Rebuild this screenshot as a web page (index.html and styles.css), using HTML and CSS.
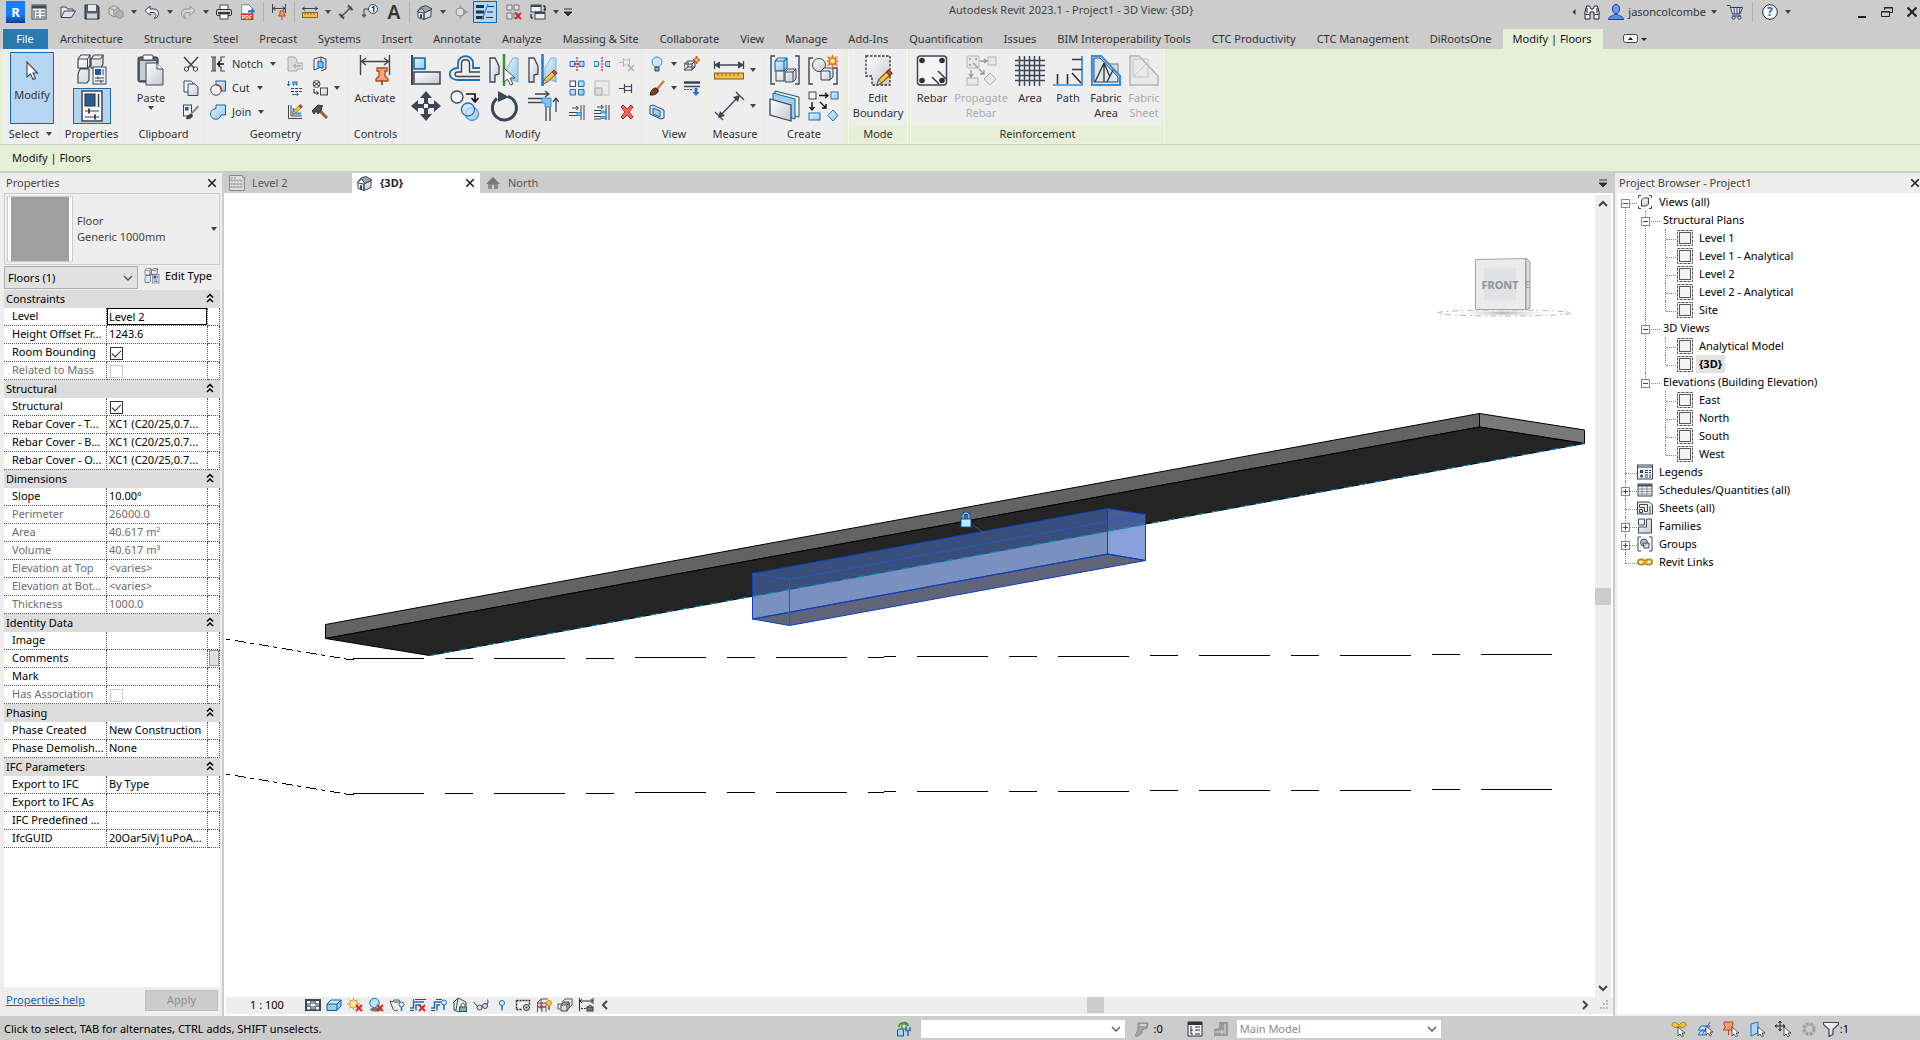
FILE: index.html
```html
<!DOCTYPE html>
<html lang="en">
<head>
    <meta charset="UTF-8">
    <meta name="viewport" content="width=device-width, initial-scale=1.0">
    <title>Autodesk Revit 2023.1 - Project1 - 3D View: {3D}</title>
    <link rel="stylesheet" href="styles.css">
</head>
<body>
    <!-- Icon sprite -->
    <svg class="sprite" aria-hidden="true">
        <defs>
            <linearGradient id="gMetal" x1="0" y1="0" x2="1" y2="1"><stop offset="0" stop-color="#fff"/><stop offset="1" stop-color="#c3c8d0"/></linearGradient>
            <linearGradient id="gBlue" x1="0" y1="0" x2="1" y2="1"><stop offset="0" stop-color="#e3f3fc"/><stop offset="1" stop-color="#93c6e6"/></linearGradient>
            <radialGradient id="gShadow"><stop offset="0" stop-color="#aaa"/><stop offset="1" stop-color="#fff" stop-opacity="0"/></radialGradient>
        </defs>

        <!-- shared 16px parts -->
        <symbol id="caret" viewBox="0 0 8 6"><path d="M1 1h6L4 5z" fill="#444"/></symbol>
        <symbol id="close" viewBox="0 0 12 12"><path d="M1.500 1.500l9 9M10.500 1.500l-9 9" stroke="#222" stroke-width="2" fill="none"/></symbol>
        <symbol id="chevron" viewBox="0 0 12 8"><path d="M2 2l4 4 4-4" stroke="#555" stroke-width="1.300" fill="none"/></symbol>
        <symbol id="collapse" viewBox="0 0 8 10"><path d="M1 4.500l3-3 3 3M1 9l3-3 3 3" stroke="#000" stroke-width="1.500" fill="none"/></symbol>
        <symbol id="cursor" viewBox="0 0 12 20"><path d="M1 1v15l3.500-3.200L7 18.500l2.500-1L7 12h4.500z" fill="#fff" stroke="#3c4654" stroke-width="1.100"/></symbol>
        <symbol id="redx" viewBox="0 0 8 8"><path d="M1 1l6 6M7 1L1 7" stroke="#d8282a" stroke-width="2" fill="none"/></symbol>
        <symbol id="pencil" viewBox="0 0 16 16"><path d="M1 15l1.500-5L12 1l3 3-9.500 9z" fill="#ffc62e" stroke="#7a5018"/><path d="M12 1l3 3-2 2-3-3z" fill="#b9623b" stroke="#7a3018"/><path d="M1 15l1.500-4.500 3 2.500z" fill="#f3dcb0" stroke="#444" stroke-width=".6"/></symbol>
        <symbol id="house3d" viewBox="0 0 16 16"><path d="M1 8v5.500L7 15.500V9zM7 9v6.500l7-3V5.500z" fill="url(#gMetal)" stroke="#3c4654"/><path d="M0 8l4-5 5-1.500L15 5 8 8.500 4.500 4z" fill="#9aa3ae" stroke="#3c4654"/><path d="M3 10v4l2 .6v-4z" fill="#3c4654"/></symbol>

        <!-- quick access -->
        <symbol id="q-list" viewBox="0 0 16 16"><rect x="1" y="1" width="14" height="14" fill="#eef0f2" stroke="#3c4654"/><path d="M1 3h14" stroke="#3c4654" stroke-width="3"/><path d="M3 6v8M5 7h3M5 10h3M5 13h3M10 7h4M10 10h4M10 13h4" stroke="#3c4654" fill="none"/></symbol>
        <symbol id="q-open" viewBox="0 0 16 16"><path d="M1 13V3h5l1.500 2H13v2" fill="#e4e6e8" stroke="#3c4654"/><path d="M1 13.500l3.500-6.500H15.500l-4 6.500z" fill="#dfe2e6" stroke="#3c4654"/></symbol>
        <symbol id="q-save" viewBox="0 0 16 16"><path d="M1 1h12l2 2v12H1z" fill="#56606c" stroke="#2b333d"/><rect x="4" y="1" width="8" height="6" fill="#e8eaec"/><rect x="3" y="9.500" width="10" height="5" fill="#cfd3d8"/></symbol>
        <symbol id="q-sync" viewBox="0 0 16 16"><path d="M1 4l5-2.500L11 4v6l-5 3-5-3zM1 4l5 2.500L11 4M6 6.500V13" fill="#d5d5d5" stroke="#8d8d8d"/><path d="M8 8l3.500-2L15 8v4.500l-3.500 2L8 12.500z" fill="#b5b5b5" stroke="#8d8d8d"/></symbol>
        <symbol id="q-undo" viewBox="0 0 16 16"><path d="M1 6.500L6 2v3h4c6 0 6 9 0 9.500 3-2.500 2.500-6-1-6H6v3z" fill="#f2f3f4" stroke="#3c4654"/></symbol>
        <symbol id="q-redo" viewBox="0 0 16 16"><path d="M15 6.500L10 2v3H6c-6 0-6 9 0 9.500-3-2.500-2.500-6 1-6h3v3z" fill="#d4d4d4" stroke="#909090"/></symbol>
        <symbol id="q-print" viewBox="0 0 16 16"><path d="M4 6V1h8v5" fill="#fff" stroke="#3c4654"/><rect x=".5" y="5.500" width="15" height="6" rx="1.500" fill="#cfd3d8" stroke="#2b333d"/><path d="M2 9h12" stroke="#2b333d" stroke-width="2"/><path d="M4 10h8v5H4z" fill="#fff" stroke="#3c4654"/></symbol>
        <symbol id="q-dim" viewBox="0 0 16 16"><path d="M1.500 0v9M14.500 0v9M2 4.500h12M4.500 2.500L2 4.500l2.500 2M11.500 2.500L14 4.500l-2.500 2" stroke="#3c4654" fill="none"/><path d="M9 7h4v3l1.500 2h-7L9 10zM11 12v4" fill="#f0a070" stroke="#b5451a"/></symbol>
        <symbol id="q-ruler" viewBox="0 0 16 16"><path d="M0 4.500h16M3 2.500L.5 4.500 3 6.500M13 2.500l2.500 2L13 6.500" stroke="#3c4654" fill="none"/><path d="M.5 8.500h15v5H.5z" fill="#f2c14e" stroke="#8a6514"/><path d="M3 9v2M6 9v2M9 9v2M12 9v2" stroke="#8a6514"/></symbol>
        <symbol id="q-aligned" viewBox="0 0 16 16"><path d="M3 13L13 3M1 10l5 5M10 1l5 5M3 9.500V13h3.500M9.500 3H13v3.500" stroke="#3c4654" fill="none" stroke-width="1.200"/></symbol>
        <symbol id="q-section" viewBox="0 0 16 16"><path d="M5 8L8 3l7 5-7 5z" fill="#9b9b9b"/><circle cx="7" cy="8" r="4" fill="#dedede" stroke="#8a8a8a"/><path d="M7 1v3M7 12v3" stroke="#8a8a8a"/></symbol>
        <symbol id="q-thin" viewBox="0 0 20 16"><path d="M1 2.500h8M1 8h8M1 13.500h8" stroke="#2b333d" stroke-width="3"/><path d="M12 2.500h7M12 8h6M11 13.500h7" stroke="#2b333d"/><path d="M13 0L7 16" stroke="#3391e6" stroke-width="1.300"/></symbol>
        <symbol id="q-hidden" viewBox="0 0 16 16"><path d="M1 1h5v5H1zM8 1h5v5H8zM1 9h5v6H1zM8 9h4v5H8z" fill="#dfe2e6" stroke="#777"/><path d="M9 9l6 6M15 9l-6 6" stroke="#d8282a" stroke-width="2"/></symbol>
        <symbol id="q-switch" viewBox="0 0 16 16"><rect x="1" y="1" width="10" height="7" fill="#eee" stroke="#3c4654"/><rect x="5" y="8" width="10" height="7" fill="#eee" stroke="#3c4654"/><path d="M1 2h10M5 9h10" stroke="#3c4654" stroke-width="2"/><path d="M13 2h2v4M1 10v4h2M13.500 5L15 6.500 16 5" stroke="#000" fill="none"/></symbol>
        <symbol id="q-custom" viewBox="0 0 10 8"><path d="M1 1h8M1 4h8L5 8z" stroke="#333" fill="#333"/></symbol>
        <symbol id="q-binoc" viewBox="0 0 16 16"><path d="M1 8l1.500-6h3L7 5h2l1.500-3h3L15 8v7h-5V8H6v7H1z" fill="#f0f0f4" stroke="#1e2430"/><path d="M3 4v5M13 4v5M1.500 10.500h4M10.500 10.500h4" stroke="#1e2430" fill="none"/></symbol>
        <symbol id="q-user" viewBox="0 0 16 16"><ellipse cx="8" cy="5" rx="3.500" ry="4.500" fill="#6a98f0" stroke="#1d3f9a"/><path d="M.5 15.500c.5-4 4-3 6-5h3c2 2 5.500 1 6 5z" fill="#5d8eea" stroke="#1d3f9a"/></symbol>
        <symbol id="q-cart" viewBox="0 0 16 16"><path d="M0 1.500h3L5.500 10H13l2.500-6.500H4" fill="#eceef4" stroke="#2b3870"/><path d="M5 12h9M7 4l.5 6M10 4v6M13 4l-1 6" stroke="#2b3870" fill="none"/><circle cx="6.500" cy="13.700" r="1.500" fill="#fff" stroke="#2b3870"/><circle cx="12.500" cy="13.700" r="1.500" fill="#fff" stroke="#2b3870"/></symbol>

        <!-- ribbon, large -->
        <symbol id="r-types" viewBox="0 0 32 32"><path d="M2 5l3-4h9v11l-2 2H2zM15 5l3-4h9v9l-2 4H15zM2 20l2-5h9v11l-2 3H2z" fill="url(#gMetal)" stroke="#3c4654" stroke-width="1.200"/><path d="M2 5h9.500v9M11.500 5L14 1M15 5h9.500M24.500 5L27 1" stroke="#3c4654" fill="none"/><rect x="17" y="13" width="13" height="17" fill="#f3f3f3" stroke="#3c4654"/><rect x="19" y="15" width="6" height="6" fill="#1d5b9c"/><path d="M27 15v6M19 24h9M19 27h9M22 22.500v3M25 26v3" stroke="#3c4654"/></symbol>
        <symbol id="r-props" viewBox="0 0 32 32"><rect x="6" y="1" width="20" height="30" fill="#f5f5f5" stroke="#3c4654" stroke-width="1.500"/><rect x="9" y="4" width="10" height="12" fill="#2d5c8f" stroke="#2b333d"/><path d="M22.500 4v13" stroke="#3c4654" stroke-width="1.500"/><path d="M9 21h14M9 27h14" stroke="#3c4654" stroke-width="1.200"/><path d="M13 18.500v5M19 24.500v5" stroke="#3c4654" stroke-width="2"/></symbol>
        <symbol id="r-paste" viewBox="0 0 32 32"><rect x="3" y="3" width="20" height="25" rx="2" fill="#59626e" stroke="#2b333d"/><rect x="8" y="1" width="10" height="5" rx="1" fill="#fff" stroke="#3c4654"/><rect x="5" y="7" width="16" height="19" fill="#c9ccd1"/><path d="M11 9h11l6 6v16H11z" fill="url(#gMetal)" stroke="#3c4654"/><path d="M22 9v6h6" fill="#fff" stroke="#3c4654"/></symbol>
        <symbol id="r-activate" viewBox="0 0 32 32"><path d="M1.500 1v20M30.500 1v20M2 7.500h28M7 4L2.500 7.500 7 11M25 4l4.500 3.500L25 11" stroke="#3c4654" stroke-width="1.400" fill="none"/><path d="M18 14h10v3h-2v5l3 3v2H17v-2l3-3v-5h-2z" fill="#f4a47a" stroke="#b5451a" stroke-width="1.300"/><path d="M23 27v4" stroke="#3c4654" stroke-width="1.500"/></symbol>
        <symbol id="r-align" viewBox="0 0 32 32"><path d="M2 1v30" stroke="#111" stroke-width="1.500"/><rect x="4" y="4" width="11" height="11" fill="url(#gBlue)" stroke="#0b62ae" stroke-width="1.500"/><rect x="4" y="18" width="26" height="12" fill="url(#gMetal)" stroke="#3c4654" stroke-width="1.500"/></symbol>
        <symbol id="r-offset" viewBox="0 0 32 32"><path d="M31 14H24V9c0-9-15-9-15 0v5c-11 0-11 12 0 12h22" fill="none" stroke="#1f6fc0" stroke-width="1.800"/><path d="M31 18H20.500V9.500c0-5-8-5-8 0V18H9c-4 0-4 4.500 0 4.500h22" fill="none" stroke="#3c4654" stroke-width="1.400"/></symbol>
        <symbol id="r-mirror" viewBox="0 0 32 32"><path d="M2 4l5 0 4 8v8l-4 1v7H2z" fill="url(#gMetal)" stroke="#3c4654" stroke-width="1.300"/><path d="M30 4h-5l-6 10v12l6 0 5 2z" fill="url(#gBlue)" stroke="#7ab5de"/><path d="M16 0v32" stroke="#2f9a22" stroke-width="2.500"/><path d="M16 14v14l3.500-3 3 6 2.500-1-3-6h5z" fill="#fff" stroke="#3c4654"/></symbol>
        <symbol id="r-mirror2" viewBox="0 0 32 32"><path d="M2 4h5l4 8v8l-4 1v7H2z" fill="url(#gMetal)" stroke="#3c4654" stroke-width="1.300"/><path d="M29 4h-5l-6 10v12h6l5 2z" fill="url(#gBlue)" stroke="#7ab5de"/><path d="M15.500 0v32" stroke="#1f7ad6" stroke-width="2.500"/><use href="#pencil" x="15" y="15" width="16" height="16"/></symbol>
        <symbol id="r-move" viewBox="0 0 32 32"><path d="M16 1l6 7h-4v5h-4V8h-4zM16 31l6-7h-4v-5h-4v5h-4zM1 16l7-6v4h5v4H8v4zM31 16l-7-6v4h-5v4h5v4z" fill="#3c4654"/><rect x="13.500" y="13.500" width="5" height="5" fill="#fff" stroke="#3c4654"/></symbol>
        <symbol id="r-copy" viewBox="0 0 32 32"><circle cx="8" cy="7" r="6" fill="#f6f6f6" stroke="#3c4654" stroke-width="1.300"/><path d="M17 4h9v7M22.500 8l3.500 4 3.500-4" stroke="#111" fill="none" stroke-width="1.700"/><circle cx="23" cy="24" r="6.500" fill="url(#gBlue)" stroke="#4a9ad8" stroke-width="1.300"/><circle cx="19" cy="19.500" r="6.500" fill="#c4e1f3" fill-opacity=".7" stroke="#1873c0" stroke-width="1.300"/></symbol>
        <symbol id="r-rotate" viewBox="0 0 32 32"><path d="M20 6.500A12 12 0 1 1 9 8.500" fill="none" stroke="#3c4654" stroke-width="3"/><path d="M10 1l11 6-11 5z" fill="#3c4654"/></symbol>
        <symbol id="r-trim" viewBox="0 0 32 32"><path d="M1 8.500h14M1 12.500h14M19 17v14M23 17v14M8 4h13M18 1l4 3-4 3M29 22V9M26 12l3-4 3 4" stroke="#3c4654" fill="none" stroke-width="1.300"/><path d="M15 8h9v9h-6v-4h-3z" fill="#7cc0f5" stroke="#2f8fe6"/></symbol>
        <symbol id="r-measure" viewBox="0 0 32 32"><path d="M2 11h28M7 8l-5 3 5 3M25 8l5 3-5 3M1.500 7v8M30.500 7v8" stroke="#3c4654" fill="#3c4654" stroke-width="1.300"/><rect x="1.500" y="19" width="29" height="6" fill="#f0c04a" stroke="#8a5f12"/><path d="M5 19v3M9 19v3M13 19v3M17 19v3M21 19v3M25 19v3" stroke="#8a5f12"/></symbol>
        <symbol id="r-dim" viewBox="0 0 32 32"><path d="M6 27L26 6M2 22l8 8M23 2l8 8" stroke="#3c4654" stroke-width="1.300"/><path d="M5 28l2-7 5 5zM27 5l-2 7-5-5z" fill="#3c4654"/></symbol>
        <symbol id="r-assembly" viewBox="0 0 32 32"><path d="M6 2H2v28h4M26 2h4v28h-4" fill="none" stroke="#3c4654" stroke-width="1.400"/><path d="M6 7l3-3h9v10l-3 3H6zM6 7h9v10M15 7l3-3" fill="url(#gBlue)" stroke="#1f6fc0" stroke-width="1.200"/><path d="M7 17h8v10H7zM16 18l3-3h8v10l-3 3h-8zM16 18h8v10M24 18l3-3" fill="url(#gMetal)" stroke="#3c4654"/></symbol>
        <symbol id="r-group" viewBox="0 0 32 32"><path d="M6 4H2v26h4M26 14h4v16h-4" fill="none" stroke="#3c4654" stroke-width="1.400"/><circle cx="12" cy="11" r="6.500" fill="url(#gMetal)" stroke="#3c4654"/><path d="M14 17l3-3h9v9l-3 3h-9zM14 17h9v9" fill="url(#gMetal)" stroke="#3c4654"/><path d="M25.500 0l1.500 4 4-2-2 4 3 1.500-3 1 2 4-4-2-1.500 3-1.500-3-4 2 2-4-3-1 3-1.500-2-4 4 2z" fill="#f06a1f"/><circle cx="25.500" cy="7" r="2.500" fill="#ffe97a"/></symbol>
        <symbol id="r-parts" viewBox="0 0 32 32"><path d="M6 6V1l24 6v20l-4-1z" fill="#f3f3f3" stroke="#3c4654"/><path d="M4 9V3l22 6v20l-3-1z" fill="#9fd0f0" stroke="#0b62ae"/><path d="M1 9l21 6v16L1 25z" fill="url(#gMetal)" stroke="#3c4654" stroke-width="1.300"/></symbol>
        <symbol id="r-similar" viewBox="0 0 32 32"><rect x="2" y="2" width="7" height="7" fill="#f3f3f3" stroke="#3c4654"/><rect x="24" y="2" width="7" height="7" fill="url(#gBlue)" stroke="#1f6fc0"/><rect x="2" y="23" width="11" height="7" fill="url(#gBlue)" stroke="#1f6fc0"/><path d="M26 20l5 5.500-5 5.500-5-5.500z" fill="url(#gBlue)" stroke="#1f6fc0"/><path d="M12 5.500h8M18 3l3 2.500L18 8M5 12v7M2.500 17L5 20l2.500-3M13 12l6 6M15 18h4v-4" stroke="#111" stroke-width="1.400" fill="none"/></symbol>
        <symbol id="r-boundary" viewBox="0 0 32 32"><path d="M4 2h24v29H10V22H4z" fill="url(#gMetal)" stroke="#333" stroke-dasharray="2.500 1.500" stroke-width="1.300"/><use href="#pencil" x="14" y="15" width="17" height="17"/></symbol>
        <symbol id="r-rebar" viewBox="0 0 32 32"><rect x="1.500" y="2" width="29" height="29" rx="3" fill="#f5f5f5" stroke="#3c4654" stroke-width="1.500"/><g fill="#2b333d"><circle cx="6" cy="6.500" r="2.800"/><circle cx="26" cy="6.500" r="2.800"/><circle cx="6" cy="26.500" r="2.800"/><circle cx="26" cy="26.500" r="2.800"/></g><path d="M22 17l8 8M16 23l7 7" stroke="#2b333d" stroke-width="1.400"/></symbol>
        <symbol id="r-propagate" viewBox="0 0 32 32"><g fill="#e8e8e8" stroke="#b2b2b2"><rect x="2" y="2" width="12" height="12" rx="1.500"/><rect x="23" y="3" width="8" height="8"/><rect x="2" y="24" width="11" height="7"/><path d="M25 19l6 6-6 6-6-6z"/></g><path d="M15 7h6M19 5l3 2-3 2M6 16v6M4 20l2 3 2-3M14 15l5 5M15 20h4v-4M8 9l5 5" stroke="#999" fill="none" stroke-width="1.300"/><circle cx="5" cy="5" r="1.200" fill="#aaa"/><circle cx="11" cy="5" r="1.200" fill="#aaa"/><circle cx="5" cy="11" r="1.200" fill="#aaa"/></symbol>
        <symbol id="r-area" viewBox="0 0 32 32"><path d="M5.500 2v30M10.500 2v30M15.500 2v30M20.500 2v30M25.500 2v30M1 6.500h30M1 11.500h30M1 16.500h30M1 21.500h30M1 26.500h30" stroke="#3c4654" stroke-width="1.500"/></symbol>
        <symbol id="r-path" viewBox="0 0 32 32"><path d="M30 2v29H1" fill="none" stroke="#2f8fe6" stroke-width="1.700"/><path d="M20 5.500h10M20 15.500h10M5.500 20v10M15.500 20v10M20 19l9 10" stroke="#2b333d" stroke-width="1.600"/></symbol>
        <symbol id="r-fabric" viewBox="0 0 32 32"><rect x="17" y="10" width="11" height="14" fill="#ddd" stroke="#777"/><path d="M2 2h9l19 20v9H2z" fill="#dfe4ea" stroke="#3391e6" stroke-width="2.200"/><path d="M4 4h6l18 19v5H4z" fill="none" stroke="#3c4654"/><path d="M5 28L14 9v19M14 9l6 14M17 28l6-12" stroke="#2b333d" stroke-width="1.300" fill="none"/></symbol>
        <symbol id="r-sheet" viewBox="0 0 32 32"><path d="M2 2h9l19 20v9H2z" fill="#e9e9e9" stroke="#b2b2b2" stroke-width="1.500"/><path d="M5 5h15v18H5zM6 22L19 9" fill="none" stroke="#c2c2c2"/></symbol>

        <!-- ribbon, small -->
        <symbol id="s-cut" viewBox="0 0 16 16"><path d="M1 1l10 11M15 1L5 12" stroke="#3c4654" stroke-width="1.500"/><circle cx="3.500" cy="13" r="2.200" fill="none" stroke="#3c4654"/><circle cx="12.500" cy="13" r="2.200" fill="none" stroke="#3c4654"/></symbol>
        <symbol id="s-copy" viewBox="0 0 16 16"><path d="M1 1h7l2 2v9H1z" fill="#f6f6f6" stroke="#3c4654"/><path d="M5 4h7l3 3v8.500H5z" fill="url(#gMetal)" stroke="#3c4654"/></symbol>
        <symbol id="s-match" viewBox="0 0 16 16"><rect x=".5" y="1" width="8" height="11" fill="#f3f3f3" stroke="#3c4654"/><rect x="2" y="3" width="3.500" height="3.500" fill="#1d5b9c"/><path d="M15.500 2L8 10" stroke="#8a9099" stroke-width="2"/><path d="M3 15c1-5 4-5 6-5l1 1.500C9 15 6 15.500 3 15z" fill="#3c4654"/></symbol>
        <symbol id="s-notch" viewBox="0 0 16 16"><path d="M1 1h5M1 15h5M3 1v14M5 1v14M15 1h-4v4h-2v6h2v4h4" fill="none" stroke="#3c4654" stroke-width="1.200"/><path d="M14 8H8M10 6L7.500 8l2.500 2" stroke="#111" fill="none" stroke-width="1.300"/></symbol>
        <symbol id="s-cutgeo" viewBox="0 0 16 16"><rect x="6" y="1" width="9.500" height="10" fill="url(#gBlue)" stroke="#0b62ae"/><circle cx="6" cy="10" r="5.300" fill="#f3f3f3" stroke="#3c4654"/><path d="M6 4.700A5.300 5.300 0 0 1 11.300 10" fill="none" stroke="#d22" stroke-width="1.500"/></symbol>
        <symbol id="s-join" viewBox="0 0 16 16"><path d="M6 1h9.500v10H11a5.300 5.300 0 1 1-5-6.300z" fill="url(#gBlue)" stroke="#0b62ae"/></symbol>
        <symbol id="s-cope" viewBox="0 0 16 16"><path d="M1 1h7l2 3v3h6v6h-6v2H1z" fill="#ddd" stroke="#aaa"/><path d="M14 10H7M9 8l-2.500 2L9 12" stroke="#999" fill="none"/></symbol>
        <symbol id="s-split" viewBox="0 0 16 16"><path d="M2 3l7-2v10l-7 3zM9 1l5 2v10l-5 2" fill="url(#gMetal)" stroke="#3c4654"/><path d="M6 5l5 1v6l-5-1z" fill="#7cc0f5" stroke="#0b62ae"/></symbol>
        <symbol id="s-wall" viewBox="0 0 16 16"><path d="M1.500 1v4M0 4l1.500 2L3 4M6 1v4h1V2h2v3h1V1" stroke="#1f6fc0" fill="none"/><path d="M4 8.500h12M4 11.500h12" stroke="#3c4654" stroke-dasharray="3 1"/><path d="M5 14.500h6M9.500 12.500l2 2-2 1.500" stroke="#1f6fc0" fill="none"/></symbol>
        <symbol id="s-paint" viewBox="0 0 16 16"><circle cx="4.500" cy="4" r="3.500" fill="#eee" stroke="#3c4654"/><path d="M2 2l5 4M7 2L2 6M2 9v4h4M4.500 11.500l2 1.500-2 1.500" stroke="#222" fill="none"/><rect x="8.500" y="8" width="7" height="7" fill="url(#gMetal)" stroke="#3c4654"/></symbol>
        <symbol id="s-joint" viewBox="0 0 16 16"><path d="M1.500 1v13.500H15M4 1v11h11" stroke="#3c4654" fill="none"/><path d="M6.500 4v5.500H14" stroke="#2f8fe6" stroke-width="2" fill="none"/><use href="#pencil" x="5" y="0" width="11" height="11"/></symbol>
        <symbol id="s-hammer" viewBox="0 0 16 16"><path d="M7 6l8 8" stroke="#9a5a34" stroke-width="3"/><path d="M0 7l6-6 5 1-2 1 1 2-4 5-2-3-2 3z" fill="#4b525c" stroke="#2b333d"/></symbol>
        <symbol id="s-spliteq" viewBox="0 0 16 16"><path d="M1 5.500h5v5H1zM10 5.500h5v5h-5z" fill="url(#gBlue)" stroke="#1f6fc0"/><path d="M8 1v14M5 8h6" stroke="#d22" stroke-dasharray="2 1" stroke-width="1.300"/></symbol>
        <symbol id="s-splitgap" viewBox="0 0 16 16"><path d="M0 5.500h4l1 2.500-1 2.500H0zM16 5.500h-4L11 8l1 2.500h4z" fill="url(#gBlue)" stroke="#1f6fc0"/><path d="M8 1v14" stroke="#d22" stroke-dasharray="2 1" stroke-width="1.300"/></symbol>
        <symbol id="s-unpin" viewBox="0 0 16 16"><path d="M0 6.500h4M4.500 2v9M10.500 2v9M5 4h5M5 9h5" stroke="#b5b5b5" fill="none"/><path d="M9 9l6 6M15 9l-6 6" stroke="#b0b0b0" stroke-width="1.500"/></symbol>
        <symbol id="s-array" viewBox="0 0 16 16"><rect x="1" y="1" width="5.500" height="5.500" fill="#fff" stroke="#3c4654"/><path d="M9.500 1H15v5.500H9.500zM1 9.500h5.500V15H1zM9.500 9.500H15V15H9.500z" fill="url(#gBlue)" stroke="#1f6fc0"/></symbol>
        <symbol id="s-scale" viewBox="0 0 16 16"><rect x="1" y="1" width="14" height="14" fill="#eaeaea" stroke="#bbb"/><path d="M1 8h7v7H1z" fill="#ddd" stroke="#aaa"/></symbol>
        <symbol id="s-pin" viewBox="0 0 16 16"><path d="M0 8.500h5M5.500 4v9M12.500 4v9M6 6.500h6M6 10.500h6" stroke="#3c4654" fill="none" stroke-width="1.200"/></symbol>
        <symbol id="s-extend" viewBox="0 0 16 16"><path d="M0 8.500h8M0 11.500h8M12 1v15M15 1v15M3 4h6M7 2l2.500 2L7 6" stroke="#3c4654" fill="none"/><path d="M8 8.500h4v3H8z" fill="#7cc0f5" stroke="#2f8fe6"/></symbol>
        <symbol id="s-extend2" viewBox="0 0 16 16"><path d="M0 6.500h7M0 9.500h7M0 12.500h7M0 15h7M12 1v15M15 1v15M3 3h6M7 1l2.500 2L7 5" stroke="#3c4654" fill="none"/><path d="M7 7h5v2H7zM7 12.500h5v2H7z" fill="#7cc0f5" stroke="#2f8fe6"/></symbol>
        <symbol id="s-delete" viewBox="0 0 16 16"><path d="M2 3l2-2 4 4 4-4 2 2-4 5 4 5-2 2-4-4-4 4-2-2 4-5z" fill="#f0685f" stroke="#b8211c"/></symbol>
        <symbol id="s-bulb" viewBox="0 0 16 16"><circle cx="8" cy="6" r="5" fill="#cfe8fb" stroke="#3c8ccf"/><path d="M6 11h4v4H6z" fill="#9aa3ae" stroke="#3c4654"/></symbol>
        <symbol id="s-displace" viewBox="0 0 16 16"><path d="M0 8l4-3h7v6l-3 3H0zM0 8h8v6M8 8l3-3M4 5v6h7M4 11l-4 3" fill="#e4e6e9" stroke="#3c4654"/><path d="M12.500 0l1 2.500L16 4l-2.500 1.500-1 2.500-1-2.500L9 4l2.500-1.500z" fill="#f0601f" stroke="#e04a10"/><circle cx="12.500" cy="4" r="1.200" fill="#ffe97a"/></symbol>
        <symbol id="s-brush" viewBox="0 0 16 16"><path d="M15 1L8 9" stroke="#c98445" stroke-width="2.500"/><path d="M1 15c1-6 4-7 6-7l2.500 2C9 14 5 15.500 1 15z" fill="#7b3f26" stroke="#442010"/></symbol>
        <symbol id="s-lines" viewBox="0 0 16 16"><path d="M0 2.500h16" stroke="#3c4654" stroke-width="2.500"/><path d="M0 6.500h16" stroke="#3c4654" stroke-width="1.500"/><path d="M0 9.500h9" stroke="#3c4654" stroke-dasharray="2 1"/><path d="M10.500 8h3v4h2L12 16l-3.500-4h2z" fill="#1f74d0"/></symbol>
        <symbol id="s-box" viewBox="0 0 16 16"><path d="M1 2l3-1 11 5v8l-3 1L1 10z" fill="#dfe2e6" stroke="#3c4654"/><path d="M4 4l7 3v6l-7-3z" fill="#9fd0f0" stroke="#0b62ae"/></symbol>

        <!-- tree / tabs / bars -->
        <symbol id="t-plan" viewBox="0 0 16 16"><path d="M.5.5h13v2h2v13H.5z" fill="#ddd" stroke="#888"/><path d="M3 2v12M6 2v12M9 5v9M12 5v9M1 5h13M1 9h13M1 12h13" stroke="#999" stroke-dasharray="2 1"/></symbol>
        <symbol id="t-elev" viewBox="0 0 16 16"><path d="M8 2l7 7H1z" fill="#777"/><path d="M3 9h10v5H3z" fill="#8a8a8a"/><path d="M7 10h2v4H7z" fill="#ccc"/></symbol>
        <symbol id="t-views" viewBox="0 0 16 16"><path d="M1.500 4V1.500H4M12 1.500h2.500V4M1.500 12v2.500H4M12 14.500h2.500V12" fill="none" stroke="#3c4654"/><path d="M4.500 6l2-2h5v6l-2 2h-5z" fill="url(#gMetal)" stroke="#3c4654"/></symbol>
        <symbol id="t-view" viewBox="0 0 16 16"><rect x=".5" y=".5" width="15" height="15" fill="none" stroke="#555" stroke-dasharray="3 1"/><rect x="2.500" y="2.500" width="11" height="11" fill="#f3f3f3" stroke="#555"/></symbol>
        <symbol id="t-legend" viewBox="0 0 16 16"><rect x=".5" y="1" width="15" height="14" fill="#eee" stroke="#3c4654"/><path d="M1 2.500h14" stroke="#8a93b0" stroke-width="3"/><path d="M3 6h3v3H3z" fill="#3c4654"/><circle cx="4.500" cy="12" r="1.500" fill="#3c4654"/><path d="M8 6.500h6M8 8.500h6M8 11h6M8 13h6" stroke="#3c4654" stroke-dasharray="3 1"/></symbol>
        <symbol id="t-sched" viewBox="0 0 16 16"><rect x="1" y="2" width="14" height="12" fill="#f5f5f5" stroke="#3c4654"/><path d="M1 3.500h14" stroke="#3c4654" stroke-width="2"/><path d="M1 7h14M1 9.500h14M1 12h14M5 4v10M10 4v10" stroke="#8a9099"/></symbol>
        <symbol id="t-sheet" viewBox="0 0 16 16"><path d="M.5 2h12l3 3v9H.5z" fill="#eee" stroke="#3c4654"/><path d="M2.500 4.500h8v7h-3v-4h-5zM2.500 9.500h3v3h-3zM13 6v7" fill="none" stroke="#3c4654"/></symbol>
        <symbol id="t-family" viewBox="0 0 16 16"><path d="M1.500 1h6v6h-6zM9.500 1h5v14h-13V9h8z" fill="url(#gMetal)" stroke="#3c4654"/></symbol>
        <symbol id="t-group" viewBox="0 0 16 16"><path d="M4 1H1v14h3M12 1h3v14h-3" fill="none" stroke="#3c4654"/><circle cx="7" cy="6.500" r="3.500" fill="#bcc3cc" stroke="#3c4654"/><path d="M6 7h6v5H7z" fill="#dfe2e6" fill-opacity=".7" stroke="#3c4654"/></symbol>
        <symbol id="t-link" viewBox="0 0 16 16"><rect x="1" y="5.500" width="6.500" height="5" rx="2.500" fill="none" stroke="#c68a08" stroke-width="2"/><rect x="8.500" y="5.500" width="6.500" height="5" rx="2.500" fill="none" stroke="#c68a08" stroke-width="2"/><path d="M5 8h6" stroke="#f0bb2c" stroke-width="1.500"/></symbol>
        <symbol id="v-detail" viewBox="0 0 16 16"><rect x=".5" y="2.500" width="15" height="11" fill="#3c4654" stroke="#3c4654"/><path d="M2 4h3v2.500H2zM11 4h3v2.500h-3zM5.500 6.500h5v3h-5zM2 10h3v2.500H2zM11 10h3v2.500h-3z" fill="#f5f5f5"/><path d="M5.500 4h5v2h-5zM2 7h3v2.500H2zM11 7h3v2.500h-3zM5.500 10h5v2.500h-5z" fill="#9097a0"/></symbol>
        <symbol id="v-style" viewBox="0 0 16 16"><path d="M1 7l4-4h10v6l-4 4.500H1z" fill="#8fd0ee"/><path d="M1 7l4-4h10l-4 4z" fill="#d5effa"/><path d="M1 7l4-4h10v6l-4 4.500H1zM1 7h10v6M11 7l4-4" fill="none" stroke="#0b5a9c"/></symbol>
        <symbol id="v-sun" viewBox="0 0 16 16"><path d="M6.500 1v12M0 7h13M2 2.500l9 9M11 2.500l-9 9" stroke="#c98a10"/><circle cx="6.500" cy="7" r="4" fill="#ffe9a0" stroke="#d99a18"/><use href="#redx" x="8" y="7" width="8" height="8"/></symbol>
        <symbol id="v-shadow" viewBox="0 0 16 16"><ellipse cx="8" cy="12.500" rx="6" ry="2" fill="#777"/><circle cx="6.500" cy="6" r="4.700" fill="#bfe0f5" stroke="#1f6fc0"/><use href="#redx" x="8" y="7" width="8" height="8"/></symbol>
        <symbol id="v-render" viewBox="0 0 16 16"><path d="M1 4l3 1 1-2h5l1 2M1 4l3 8c1 2 4 2 5 1M5 5h6" fill="#e8eaec" stroke="#555"/><circle cx="12.500" cy="7.500" r="2.500" fill="#d5ecfb" stroke="#1f6fc0"/><path d="M12.500 10v4" stroke="#1f6fc0" stroke-width="1.500"/></symbol>
        <symbol id="v-crop" viewBox="0 0 16 16"><path d="M0 11h3.500V5H14M6 13.500V8h5" fill="none" stroke="#1f6fc0" stroke-width="1.500"/><path d="M5 2.500h11M0 13.500h4M3.500 2v2" stroke="#3c4654"/><use href="#redx" x="8" y="7" width="8" height="8"/></symbol>
        <symbol id="v-cropvis" viewBox="0 0 16 16"><path d="M0 11h3.500V5H10M6 13.500V8h3" fill="none" stroke="#1f6fc0" stroke-width="1.500"/><path d="M5 2.500h6M0 13.500h4" stroke="#3c4654"/><circle cx="13" cy="5.500" r="2.500" fill="#d5ecfb" stroke="#1f6fc0"/><path d="M13 8v5" stroke="#1f6fc0" stroke-width="1.500"/></symbol>
        <symbol id="v-lock" viewBox="0 0 16 16"><path d="M1 6l5-5 8 4v4M2 6v7l5 2M6 1L4 13" fill="#e8eaec" stroke="#3c4654"/><path d="M9 10V8.500c0-3 4-3 4 0V10" fill="none" stroke="#2b5550"/><rect x="7.500" y="10" width="7" height="4.500" fill="#7fb0a8" stroke="#2b5550"/></symbol>
        <symbol id="v-hide" viewBox="0 0 16 16"><path d="M.5 5l5 5.500M14.500 2.500c1 2 .5 4-1 6" fill="none" stroke="#3c4654"/><circle cx="6.500" cy="10.500" r="2.500" fill="#cfe3f2" stroke="#3c4654"/><circle cx="12" cy="9" r="2.500" fill="#cfe3f2" stroke="#3c4654"/></symbol>
        <symbol id="v-reveal" viewBox="0 0 16 16"><circle cx="8" cy="6" r="2.500" fill="#d5ecfb" stroke="#1f6fc0"/><path d="M8 8.500v5" stroke="#1f6fc0" stroke-width="1.500"/></symbol>
        <symbol id="v-temp" viewBox="0 0 16 16"><path d="M1.500 3.500h13v4M1.500 3.500v9H7" fill="none" stroke="#222" stroke-width="1.500" stroke-dasharray="2 1"/><circle cx="11.500" cy="10.500" r="3" fill="#ddd" stroke="#222"/><circle cx="11.500" cy="10.500" r="1" fill="#222"/></symbol>
        <symbol id="v-analytic" viewBox="0 0 16 16"><path d="M1 6l4-4h7M1 6h9M5 2v11M1 10h9" stroke="#555" fill="none"/><path d="M1.500 6v9M6 6v9M10 6v9M1 10h9" stroke="#b33" fill="none"/><circle cx="13" cy="6" r="2.500" fill="#ffd24a" stroke="#f07a10"/><path d="M13 9v4" stroke="#1f6fc0" stroke-width="1.500"/></symbol>
        <symbol id="v-displace" viewBox="0 0 16 16"><path d="M5 5l3-3h7v6l-3 3M1 7h4M5 5h7v6M1 7v5h2" fill="none" stroke="#555"/><path d="M4 8l2-2h6v5l-2 3H4zM4 8h6v6M10 8l2-2" fill="#dedede" stroke="#444"/></symbol>
        <symbol id="v-constraint" viewBox="0 0 16 16"><path d="M1.500 1v13M15 1v6M2 4h13M4 2L2 4l2 2M12.500 2l2 2-2 2" fill="none" stroke="#333"/><path d="M3 11.500h5" stroke="#333" stroke-dasharray="2 1"/><path d="M10 10.500c0-3 4-3 4 0" fill="none" stroke="#333"/><rect x="9" y="10" width="6" height="4" fill="#777" stroke="#333"/></symbol>
        <symbol id="b-workset" viewBox="0 0 16 16"><path d="M1.500 9l2-1h3l1 1v6h-6z" fill="#9fd4f5" stroke="#0b5a9c"/><path d="M3 6c0-5 9-6 9-1" fill="none" stroke="#2f9a22" stroke-width="1.700"/><path d="M6 3h4v5H6z" fill="#cfe8d0" stroke="#2f7a22"/><path d="M12 15V9M10 6v3.500h4V6" fill="none" stroke="#1f6fc0" stroke-width="1.500"/></symbol>
        <symbol id="b-edit" viewBox="0 0 16 16"><path d="M5 2h10l-1 5-5 2v3l-4 3H2l3-6z" fill="#a5a5a5" stroke="#888"/><path d="M7 4h6" stroke="#fff"/></symbol>
        <symbol id="b-options" viewBox="0 0 16 16"><path d="M1 1h14v14H1z" fill="#f0f0f0" stroke="#2b333d"/><path d="M1 2.500h14" stroke="#2b333d" stroke-width="3"/><path d="M4 5v8h2M4 9h2M8 6h5M8 9h5M8 13h5" stroke="#2b333d" fill="none"/></symbol>
        <symbol id="b-exclude" viewBox="0 0 16 16"><path d="M1 15V8l5-1V1h9v14z" fill="#999"/><path d="M2 11h8M8 9l2.500 2L8 13M12 3v10" stroke="#dedede" fill="none"/></symbol>
        <symbol id="b-sellink" viewBox="0 0 16 16"><path d="M1 3c2-3 5-1 7 1 2-2 5-4 7-1 0 4-5 4-7 2-2 2-7 2-7-2z" fill="#f5c542" stroke="#b07a08"/><path d="M7 6v9l2-2 2 3 1.500-1L11 12h3z" fill="#fff" stroke="#333" stroke-width=".8"/></symbol>
        <symbol id="b-selunder" viewBox="0 0 16 16"><path d="M4 5h9l-3 4H1zM4 10h7l-2 4H1z" fill="#bfe0f5" stroke="#1f6fc0"/><path d="M13 1L5 14" stroke="#1f6fc0"/><path d="M9 5v9l2-2 2 3 1.500-1L13 11h3z" fill="#fff" stroke="#333" stroke-width=".8"/></symbol>
        <symbol id="b-selpin" viewBox="0 0 16 16"><path d="M1 1h9v3L9 5v2l2 2H0l2-2V5L1 4zM5.500 9v5" fill="#f0a070" stroke="#b5451a"/><path d="M9 6v9l2-2 2 3 1.500-1L13 12h3z" fill="#fff" stroke="#333" stroke-width=".8"/></symbol>
        <symbol id="b-selface" viewBox="0 0 16 16"><path d="M2 3l7-2v11l-7 3z" fill="#a8d8f4" stroke="#1f6fc0"/><path d="M9 6v9l2-2 2 3 1.500-1L13 12h3z" fill="#fff" stroke="#333" stroke-width=".8"/></symbol>
        <symbol id="b-drag" viewBox="0 0 16 16"><path d="M5 0v10M0 5h10M3.500 2L5 0l1.500 2M3.500 8L5 10l1.500-2M2 3.500L0 5l2 1.500M8 3.500L10 5 8 6.500" stroke="#222" fill="none"/><path d="M9 6v9l2-2 2 3 1.500-1L13 12h3z" fill="#fff" stroke="#333" stroke-width=".8"/></symbol>
        <symbol id="b-ring" viewBox="0 0 16 16"><circle cx="8" cy="8" r="5" fill="none" stroke="#a2a2a2" stroke-width="3.500" stroke-dasharray="3 1"/></symbol>
        <symbol id="b-funnel" viewBox="0 0 16 16"><path d="M.5 1.500h15v2l-5.500 5v5l-4 2v-7l-5.500-5z" fill="url(#gMetal)" stroke="#3c4654" stroke-width="1.200"/></symbol>
    </svg>

    <div class="app">
        <header class="title-bar">
            <div class="quick-access">
                <button class="logo" aria-label="Application menu">R</button>
                <button class="tool"><svg><use href="#q-list"/></svg></button>
                <span class="spacer"></span>
                <button class="tool"><svg><use href="#q-open"/></svg></button>
                <button class="tool"><svg><use href="#q-save"/></svg></button>
                <button class="tool"><svg><use href="#q-sync"/></svg></button>
                <button class="drop"><svg><use href="#caret"/></svg></button>
                <button class="tool"><svg><use href="#q-undo"/></svg></button>
                <button class="drop"><svg><use href="#caret"/></svg></button>
                <button class="tool"><svg><use href="#q-redo"/></svg></button>
                <button class="drop"><svg><use href="#caret"/></svg></button>
                <button class="tool"><svg><use href="#q-print"/></svg></button>
                <button class="tool"><svg class="pdf" viewBox="0 0 18 18"><path d="M2 1h8l4 4v6H2z" fill="#fff" stroke="#777"/><path d="M9 7h4V4l4 4-4 4V9.500H9z" fill="#1d74c4"/><rect x="1" y="11" width="14" height="7" fill="#e5301f"/><text x="2" y="17">PDF</text></svg></button>
                <span class="sep"></span>
                <button class="tool"><svg><use href="#q-dim"/></svg></button>
                <span class="sep"></span>
                <button class="tool"><svg><use href="#q-ruler"/></svg></button>
                <button class="drop"><svg><use href="#caret"/></svg></button>
                <button class="tool"><svg><use href="#q-aligned"/></svg></button>
                <button class="tool"><svg class="tag" viewBox="0 0 18 16"><circle cx="12" cy="5" r="4.500" fill="#f3f3f3" stroke="#3c4654"/><path d="M7.500 5H3v7M3 13.500L1 11h4z" stroke="#3c4654" fill="none"/><text x="10" y="8">1</text></svg></button>
                <button class="tool text-tool">A</button>
                <span class="sep"></span>
                <button class="tool"><svg><use href="#house3d"/></svg></button>
                <button class="drop"><svg><use href="#caret"/></svg></button>
                <button class="tool"><svg><use href="#q-section"/></svg></button>
                <button class="tool wide active"><svg><use href="#q-thin"/></svg></button>
                <span class="spacer"></span>
                <button class="tool"><svg><use href="#q-hidden"/></svg></button>
                <button class="tool"><svg><use href="#q-switch"/></svg></button>
                <button class="drop"><svg><use href="#caret"/></svg></button>
                <button class="drop"><svg class="custom"><use href="#q-custom"/></svg></button>
            </div>
            <div class="window-title">Autodesk Revit 2023.1 - Project1 - 3D View: {3D}</div>
            <div class="account">
                <button class="drop"><svg viewBox="0 0 6 8"><path d="M5 0v8L1 4z" fill="#333"/></svg></button>
                <button class="tool"><svg><use href="#q-binoc"/></svg></button>
                <button class="user"><svg><use href="#q-user"/></svg>jasoncolcombe</button>
                <button class="drop"><svg><use href="#caret"/></svg></button>
                <button class="tool"><svg><use href="#q-cart"/></svg></button>
                <span class="sep"></span>
                <button class="tool"><svg class="help" viewBox="0 0 16 16"><circle cx="8" cy="8" r="7.300" fill="#fff" stroke="#1e2430"/><text x="5" y="12">?</text></svg></button>
                <button class="drop"><svg><use href="#caret"/></svg></button>
            </div>
            <div class="window-buttons">
                <button aria-label="Minimize"><svg viewBox="0 0 12 12"><path d="M2 11h8" stroke="#222" stroke-width="2"/></svg></button>
                <button aria-label="Restore"><svg viewBox="0 0 12 12"><path d="M3.500 4V1.500h8v5H9M.5 5.500h8v5h-8zM3 2h9M0 6h9" stroke="#222" fill="none"/></svg></button>
                <button aria-label="Close"><svg><use href="#close"/></svg></button>
            </div>
        </header>

        <nav class="ribbon-tabs">
            <button class="file">File</button>
            <button>Architecture</button>
            <button>Structure</button>
            <button>Steel</button>
            <button>Precast</button>
            <button>Systems</button>
            <button>Insert</button>
            <button>Annotate</button>
            <button>Analyze</button>
            <button>Massing &amp; Site</button>
            <button>Collaborate</button>
            <button>View</button>
            <button>Manage</button>
            <button>Add-Ins</button>
            <button>Quantification</button>
            <button>Issues</button>
            <button>BIM Interoperability Tools</button>
            <button>CTC Productivity</button>
            <button>CTC Management</button>
            <button>DiRootsOne</button>
            <button class="current">Modify | Floors</button>
            <button class="toggle" aria-label="Minimize ribbon"><svg viewBox="0 0 26 10"><rect x=".5" y=".5" width="14" height="8" rx="2" fill="#f5f5f5" stroke="#444"/><path d="M5 6h5L7.500 3zM18 4h6l-3 3z" fill="#222"/></svg></button>
        </nav>

        <div class="ribbon">
            <section class="panel select-panel">
                <div class="panel-body">
                    <button class="big active modify-btn"><svg class="cursor-icon"><use href="#cursor"/></svg>Modify</button>
                </div>
                <h2>Select <svg class="caret"><use href="#caret"/></svg></h2>
            </section>
            <section class="panel properties-panel">
                <div class="panel-body stack">
                    <button class="icon-big"><svg><use href="#r-types"/></svg></button>
                    <button class="icon-big active"><svg><use href="#r-props"/></svg></button>
                </div>
                <h2>Properties</h2>
            </section>
            <section class="panel clipboard-panel">
                <div class="panel-body">
                    <button class="big"><svg><use href="#r-paste"/></svg>Paste<svg class="caret"><use href="#caret"/></svg></button>
                    <div class="small-grid">
                        <button><svg><use href="#s-cut"/></svg></button>
                        <button><svg><use href="#s-copy"/></svg></button>
                        <button><svg><use href="#s-match"/></svg></button>
                    </div>
                </div>
                <h2>Clipboard</h2>
            </section>
            <section class="panel geometry-panel">
                <div class="panel-body">
                    <div class="small-grid labelled">
                        <button><svg><use href="#s-notch"/></svg>Notch<svg class="caret"><use href="#caret"/></svg></button>
                        <button><svg><use href="#s-cutgeo"/></svg>Cut<svg class="caret"><use href="#caret"/></svg></button>
                        <button><svg><use href="#s-join"/></svg>Join<svg class="caret"><use href="#caret"/></svg></button>
                    </div>
                    <div class="small-grid">
                        <button><svg><use href="#s-cope"/></svg></button>
                        <button><svg><use href="#s-wall"/></svg></button>
                        <button><svg><use href="#s-joint"/></svg></button>
                        <button><svg><use href="#s-split"/></svg></button>
                        <button><svg><use href="#s-paint"/></svg></button>
                        <button><svg><use href="#s-hammer"/></svg></button>
                    </div>
                    <div class="small-grid carets">
                        <span></span>
                        <button><svg class="caret"><use href="#caret"/></svg></button>
                    </div>
                </div>
                <h2>Geometry</h2>
            </section>
            <section class="panel controls-panel">
                <div class="panel-body">
                    <button class="big"><svg><use href="#r-activate"/></svg>Activate</button>
                </div>
                <h2>Controls</h2>
            </section>
            <section class="panel modify-panel">
                <div class="panel-body">
                    <div class="big-grid four">
                        <button><svg><use href="#r-align"/></svg></button>
                        <button><svg><use href="#r-offset"/></svg></button>
                        <button><svg><use href="#r-mirror"/></svg></button>
                        <button><svg><use href="#r-mirror2"/></svg></button>
                        <button><svg><use href="#r-move"/></svg></button>
                        <button><svg><use href="#r-copy"/></svg></button>
                        <button><svg><use href="#r-rotate"/></svg></button>
                        <button><svg><use href="#r-trim"/></svg></button>
                    </div>
                    <div class="small-grid">
                        <button><svg><use href="#s-spliteq"/></svg></button>
                        <button><svg><use href="#s-array"/></svg></button>
                        <button><svg><use href="#s-extend"/></svg></button>
                        <button><svg><use href="#s-splitgap"/></svg></button>
                        <button><svg><use href="#s-scale"/></svg></button>
                        <button><svg><use href="#s-extend2"/></svg></button>
                        <button><svg><use href="#s-unpin"/></svg></button>
                        <button><svg><use href="#s-pin"/></svg></button>
                        <button><svg><use href="#s-delete"/></svg></button>
                    </div>
                </div>
                <h2>Modify</h2>
            </section>
            <section class="panel view-panel">
                <div class="panel-body">
                    <div class="small-grid">
                        <button><svg><use href="#s-bulb"/></svg></button>
                        <button><svg><use href="#s-brush"/></svg></button>
                        <button><svg><use href="#s-box"/></svg></button>
                    </div>
                    <div class="small-grid carets">
                        <button><svg class="caret"><use href="#caret"/></svg></button>
                        <button><svg class="caret"><use href="#caret"/></svg></button>
                    </div>
                    <div class="small-grid">
                        <button><svg><use href="#s-displace"/></svg></button>
                        <button><svg><use href="#s-lines"/></svg></button>
                    </div>
                </div>
                <h2>View</h2>
            </section>
            <section class="panel measure-panel">
                <div class="panel-body">
                    <div class="big-grid">
                        <button><svg><use href="#r-measure"/></svg></button>
                        <button><svg><use href="#r-dim"/></svg></button>
                    </div>
                    <div class="big-grid carets">
                        <button><svg class="caret"><use href="#caret"/></svg></button>
                        <button><svg class="caret"><use href="#caret"/></svg></button>
                    </div>
                </div>
                <h2>Measure</h2>
            </section>
            <section class="panel create-panel">
                <div class="panel-body">
                    <div class="big-grid two">
                        <button><svg><use href="#r-assembly"/></svg></button>
                        <button><svg><use href="#r-group"/></svg></button>
                        <button><svg><use href="#r-parts"/></svg></button>
                        <button><svg><use href="#r-similar"/></svg></button>
                    </div>
                </div>
                <h2>Create</h2>
            </section>
            <section class="panel context mode-panel">
                <div class="panel-body">
                    <button class="big"><svg><use href="#r-boundary"/></svg>Edit<br>Boundary</button>
                </div>
                <h2>Mode</h2>
            </section>
            <section class="panel context rebar-panel">
                <div class="panel-body">
                    <button class="big"><svg><use href="#r-rebar"/></svg>Rebar</button>
                    <button class="big long" disabled><svg><use href="#r-propagate"/></svg>Propagate<br>Rebar</button>
                    <button class="big"><svg><use href="#r-area"/></svg>Area</button>
                    <button class="big"><svg><use href="#r-path"/></svg>Path</button>
                    <button class="big"><svg><use href="#r-fabric"/></svg>Fabric<br>Area</button>
                    <button class="big" disabled><svg><use href="#r-sheet"/></svg>Fabric<br>Sheet</button>
                </div>
                <h2>Reinforcement</h2>
            </section>
        </div>

        <div class="options-bar">Modify | Floors</div>

        <main class="workspace">
            <aside class="properties">
                <div class="palette-title">Properties<button class="palette-close" aria-label="Close"><svg><use href="#close"/></svg></button></div>
                <button class="type-selector">
                    <span class="thumb"></span>
                    <span class="type-name">Floor<br>Generic 1000mm</span>
                    <svg class="caret"><use href="#caret"/></svg>
                </button>
                <div class="filter-row">
                    <div class="combo">
                        <select aria-label="Category filter"><option>Floors (1)</option></select>
                        <svg><use href="#chevron"/></svg>
                    </div>
                    <button class="edit-type"><svg><use href="#r-types"/></svg>Edit Type</button>
                </div>
                <div class="grid-scroll">
                    <table class="param-grid">
                        <colgroup><col class="col-name"><col><col class="col-assoc"></colgroup>
                        <tbody>
                            <tr class="group"><th colspan="3">Constraints<svg><use href="#collapse"/></svg></th></tr>
                            <tr><td><label for="level">Level</label></td><td class="focused"><input type="text" id="level" value="Level 2"></td><td></td></tr>
                            <tr><td>Height Offset Fr...</td><td>1243.6</td><td></td></tr>
                            <tr><td><label for="room">Room Bounding</label></td><td><input type="checkbox" id="room" checked></td><td></td></tr>
                            <tr class="locked"><td><label for="mass">Related to Mass</label></td><td><input type="checkbox" id="mass" disabled></td><td></td></tr>
                            <tr class="group"><th colspan="3">Structural<svg><use href="#collapse"/></svg></th></tr>
                            <tr><td><label for="structural">Structural</label></td><td><input type="checkbox" id="structural" checked></td><td></td></tr>
                            <tr><td>Rebar Cover - T...</td><td>XC1 (C20/25,0.7...</td><td></td></tr>
                            <tr><td>Rebar Cover - B...</td><td>XC1 (C20/25,0.7...</td><td></td></tr>
                            <tr><td>Rebar Cover - O...</td><td>XC1 (C20/25,0.7...</td><td></td></tr>
                            <tr class="group"><th colspan="3">Dimensions<svg><use href="#collapse"/></svg></th></tr>
                            <tr><td>Slope</td><td>10.00°</td><td></td></tr>
                            <tr class="locked"><td>Perimeter</td><td>26000.0</td><td></td></tr>
                            <tr class="locked"><td>Area</td><td>40.617 m²</td><td></td></tr>
                            <tr class="locked"><td>Volume</td><td>40.617 m³</td><td></td></tr>
                            <tr class="locked"><td>Elevation at Top</td><td>&lt;varies&gt;</td><td></td></tr>
                            <tr class="locked"><td>Elevation at Bot...</td><td>&lt;varies&gt;</td><td></td></tr>
                            <tr class="locked"><td>Thickness</td><td>1000.0</td><td></td></tr>
                            <tr class="group"><th colspan="3">Identity Data<svg><use href="#collapse"/></svg></th></tr>
                            <tr><td>Image</td><td></td><td></td></tr>
                            <tr><td>Comments</td><td></td><td><button class="assoc" aria-label="Associate parameter"></button></td></tr>
                            <tr><td>Mark</td><td></td><td></td></tr>
                            <tr class="locked"><td><label for="assoc">Has Association</label></td><td><input type="checkbox" id="assoc" disabled></td><td></td></tr>
                            <tr class="group"><th colspan="3">Phasing<svg><use href="#collapse"/></svg></th></tr>
                            <tr><td>Phase Created</td><td>New Construction</td><td></td></tr>
                            <tr><td>Phase Demolish...</td><td>None</td><td></td></tr>
                            <tr class="group"><th colspan="3">IFC Parameters<svg><use href="#collapse"/></svg></th></tr>
                            <tr><td>Export to IFC</td><td>By Type</td><td></td></tr>
                            <tr><td>Export to IFC As</td><td></td><td></td></tr>
                            <tr><td>IFC Predefined ...</td><td></td><td></td></tr>
                            <tr><td>IfcGUID</td><td>20Oar5iVj1uPoA...</td><td></td></tr>
                        </tbody>
                    </table>
                </div>
                <div class="palette-footer">
                    <a href="#">Properties help</a>
                    <button disabled>Apply</button>
                </div>
            </aside>

            <div class="view-area">
                <div class="view-tabs">
                    <button class="view-tab"><svg><use href="#t-plan"/></svg>Level 2</button>
                    <button class="view-tab open"><svg><use href="#house3d"/></svg>{3D}<svg class="x"><use href="#close"/></svg></button>
                    <button class="view-tab"><svg><use href="#t-elev"/></svg>North</button>
                    <button class="tab-menu" aria-label="Open views"><svg><use href="#q-custom"/></svg></button>
                </div>
                <div class="canvas-row">
                    <svg class="canvas" viewBox="224 193 1371 804" preserveAspectRatio="xMidYMin meet">
                        <!-- levels -->
                        <g class="level">
                            <path class="near" d="M226 639L346 659"/>
                            <path d="M346 659.500h8"/>
                            <path class="far" d="M353.500 659L1554 654.500"/>
                            <path class="near" d="M226 774L346 794"/>
                            <path d="M346 794.500h8"/>
                            <path class="far" d="M353.500 794L1554 789.500"/>
                        </g>
                        <!-- sloped slab -->
                        <g class="slab">
                            <path fill="#636363" d="M325.500 624.500L1479.500 413.500V427L325.500 638.500z"/>
                            <path fill="#797979" d="M1479.500 413.500L1584.500 430V443.500L1479.500 427z"/>
                            <path fill="#242424" d="M325.500 638.500L1479.500 427L1584.500 443.500L429.500 655.500z"/>
                            <path class="join-edge" d="M429.500 655.500L1584.500 443.500"/>
                        </g>
                        <!-- selected floor -->
                        <g class="selected">
                            <path fill="rgba(66,97,164,.7)" d="M752.500 573.500L1107.500 508.500V554L752.500 619z"/>
                            <path fill="rgba(84,120,202,.7)" d="M1107.500 508.500L1145.500 514.500V560.500L1107.500 554z"/>
                            <path fill="rgba(29,35,66,.7)" d="M752.500 619L1107.500 554L1145.500 560.500L789.500 625.500z"/>
                            <path class="hidden-edge" d="M752.500 573.500L789.500 579.500V625.500M789.500 579.500L1145.500 514.500"/>
                            <path class="join-edge" d="M752.500 596.500L1145.500 524.500"/>
                        </g>
                        <path d="M973 525L1007 549" stroke="#505050" fill="none"/>
                        <path d="M963 519v-3c0-4 6-4 6 0v3" fill="none" stroke="#0b4fa8" stroke-width="3"/>
                        <path d="M963 519v-3c0-4 6-4 6 0v3" fill="none" stroke="#c8f4ff"/>
                        <rect x="961" y="519" width="10" height="8" fill="#b5f0fa" stroke="#0b4fa8"/>
                        <!-- view cube -->
                        <ellipse cx="1503" cy="313" rx="50" ry="4" fill="url(#gShadow)"/>
                        <ellipse cx="1504" cy="313" rx="67" ry="3" fill="none" stroke="#b5b5b5" stroke-dasharray="6 3 2 4"/>
                        <path d="M1526 258l4 4v46l-4 2z" fill="#dcdcdc" stroke="#999"/>
                        <path d="M1475.500 259.500L1525.500 258.500V309.500H1475.500z" fill="#ebebeb" stroke="#a5a5a5"/>
                        <rect x="1484" y="268" width="32" height="32" fill="#dfe1e5"/>
                        <text x="1500" y="289" text-anchor="middle" class="cube-face">FRONT</text>
                        <text x="1525" y="288" class="cube-side">E</text>
                    </svg>
                    <div class="v-scroll">
                        <svg class="arrow"><path d="M2 8l4-4 4 4" fill="none" stroke="#444" stroke-width="2"/></svg>
                        <span class="thumb"></span>
                        <svg class="arrow"><path d="M2 4l4 4 4-4" fill="none" stroke="#444" stroke-width="2"/></svg>
                    </div>
                </div>
                <div class="view-control">
                    <button class="scale">1 : 100</button>
                    <button><svg><use href="#v-detail"/></svg></button>
                    <button><svg><use href="#v-style"/></svg></button>
                    <button><svg><use href="#v-sun"/></svg></button>
                    <button><svg><use href="#v-shadow"/></svg></button>
                    <button><svg><use href="#v-render"/></svg></button>
                    <button><svg><use href="#v-crop"/></svg></button>
                    <button><svg><use href="#v-cropvis"/></svg></button>
                    <button><svg><use href="#v-lock"/></svg></button>
                    <button><svg><use href="#v-hide"/></svg></button>
                    <button><svg><use href="#v-reveal"/></svg></button>
                    <button><svg><use href="#v-temp"/></svg></button>
                    <button><svg><use href="#v-analytic"/></svg></button>
                    <button><svg><use href="#v-displace"/></svg></button>
                    <button><svg><use href="#v-constraint"/></svg></button>
                    <div class="h-scroll">
                        <svg class="arrow"><path d="M8 2L4 6l4 4" fill="none" stroke="#444" stroke-width="2"/></svg>
                        <span class="thumb"></span>
                        <svg class="arrow"><path d="M4 2l4 4-4 4" fill="none" stroke="#444" stroke-width="2"/></svg>
                    </div>
                    <svg class="grip" viewBox="0 0 10 10"><path d="M7 1h2M4 4h2M7 4h2M1 8h2M4 8h2M7 8h2" stroke="#bbb" stroke-width="2"/></svg>
                </div>
            </div>

            <aside class="browser">
                <div class="palette-title">Project Browser - Project1<button class="palette-close" aria-label="Close"><svg><use href="#close"/></svg></button></div>
                <ul class="tree">
                    <li>
                        <div class="node"><button class="expander open"></button><svg><use href="#t-views"/></svg>Views (all)</div>
                        <ul>
                            <li>
                                <div class="node"><button class="expander open"></button>Structural Plans</div>
                                <ul class="leaves">
                                    <li><svg><use href="#t-view"/></svg>Level 1</li>
                                    <li><svg><use href="#t-view"/></svg>Level 1 - Analytical</li>
                                    <li><svg><use href="#t-view"/></svg>Level 2</li>
                                    <li><svg><use href="#t-view"/></svg>Level 2 - Analytical</li>
                                    <li><svg><use href="#t-view"/></svg>Site</li>
                                </ul>
                            </li>
                            <li>
                                <div class="node"><button class="expander open"></button>3D Views</div>
                                <ul class="leaves">
                                    <li><svg><use href="#t-view"/></svg>Analytical Model</li>
                                    <li><svg><use href="#t-view"/></svg><b>{3D}</b></li>
                                </ul>
                            </li>
                            <li>
                                <div class="node"><button class="expander open"></button>Elevations (Building Elevation)</div>
                                <ul class="leaves">
                                    <li><svg><use href="#t-view"/></svg>East</li>
                                    <li><svg><use href="#t-view"/></svg>North</li>
                                    <li><svg><use href="#t-view"/></svg>South</li>
                                    <li><svg><use href="#t-view"/></svg>West</li>
                                </ul>
                            </li>
                        </ul>
                    </li>
                    <li><div class="node"><i></i><svg><use href="#t-legend"/></svg>Legends</div></li>
                    <li><div class="node"><button class="expander"></button><svg><use href="#t-sched"/></svg>Schedules/Quantities (all)</div></li>
                    <li><div class="node"><i></i><svg><use href="#t-sheet"/></svg>Sheets (all)</div></li>
                    <li><div class="node"><button class="expander"></button><svg><use href="#t-family"/></svg>Families</div></li>
                    <li><div class="node"><button class="expander"></button><svg><use href="#t-group"/></svg>Groups</div></li>
                    <li><div class="node"><i></i><svg><use href="#t-link"/></svg>Revit Links</div></li>
                </ul>
            </aside>
        </main>

        <footer class="status-bar">
            <span class="hint">Click to select, TAB for alternates, CTRL adds, SHIFT unselects.</span>
            <div class="worksets">
                <button><svg><use href="#b-workset"/></svg></button>
                <div class="combo"><select aria-label="Active workset"><option></option></select><svg><use href="#chevron"/></svg></div>
                <button><svg><use href="#b-edit"/></svg></button>
                <span>:0</span>
            </div>
            <div class="design-options">
                <button><svg><use href="#b-options"/></svg></button>
                <button><svg><use href="#b-exclude"/></svg></button>
                <div class="combo"><select aria-label="Design option" disabled><option>Main Model</option></select><svg><use href="#chevron"/></svg></div>
            </div>
            <div class="selection">
                <button><svg><use href="#b-sellink"/></svg></button>
                <button><svg><use href="#b-selunder"/></svg></button>
                <button><svg><use href="#b-selpin"/></svg></button>
                <button><svg><use href="#b-selface"/></svg></button>
                <button><svg><use href="#b-drag"/></svg></button>
                <button><svg><use href="#b-ring"/></svg></button>
                <button class="filter"><svg><use href="#b-funnel"/></svg></button>
                <span>:1</span>
            </div>
        </footer>
    </div>
</body>
</html>
```

FILE: styles.css
```css
* {
    margin: 0;
    padding: 0;
    box-sizing: border-box;
}

body {
    font-family: "Noto Sans", "Open Sans", sans-serif;
    font-size: 11px;
    line-height: 16px;
    color: #333;
    background: #ccc;
}

button, input, select {
    font: inherit;
    color: inherit;
    background: none;
    border: none;
    border-radius: 0;
}

button {
    display: flex;
    align-items: center;
    justify-content: center;
    white-space: nowrap;
}

svg {
    display: block;
    flex: none;
    width: 16px;
    height: 16px;
}

.sprite {
    position: absolute;
    width: 0;
    height: 0;
}

.caret {
    width: 8px;
    height: 6px;
}

.app {
    display: flex;
    flex-direction: column;
    height: 100vh;
    overflow: hidden;
}

/* Title bar */
.title-bar {
    display: flex;
    height: 29px;
}

.quick-access, .account {
    display: flex;
    align-items: center;
    height: 24px;
}

.logo {
    width: 19px;
    height: 22px;
    margin: 0 2px 0 6px;
    background: linear-gradient(#1a7cff 60%, #0a3f96);
    color: #fff;
    font-size: 13px;
    font-weight: 700;
}

.tool {
    width: 24px;
    height: 22px;
}

.tool.wide svg {
    width: 20px;
}

.tool.active, .big.active, .icon-big.active {
    background: #b5d5f0;
    border: 1px solid #1667b8;
}

.text-tool {
    font-size: 19px;
    font-weight: 600;
}

.pdf, .tag {
    width: 18px;
}

.pdf text {
    fill: #fff;
    font-size: 6px;
    font-weight: 700;
}

.tag text {
    fill: #222;
    font-size: 8px;
    font-weight: 700;
}

.help text {
    fill: #1f5fc0;
    font-size: 12px;
    font-weight: 700;
}

.drop {
    width: 12px;
    height: 22px;
}

.drop svg {
    width: 8px;
    height: 6px;
}

.drop svg.custom {
    width: 10px;
    height: 8px;
}

.spacer {
    width: 5px;
}

.sep {
    width: 1px;
    height: 20px;
    margin: 0 3px;
    background: #b0b0b0;
}

.window-title {
    flex: 1;
    text-align: center;
    line-height: 20px;
    color: #444;
}

.user {
    gap: 4px;
    padding: 0 2px 0 4px;
}

.user + .drop {
    margin-right: 3px;
}

.account .sep {
    margin: 0 5px;
}

.window-buttons {
    display: flex;
    gap: 13px;
    height: 24px;
    padding: 0 2px 0 62px;
}

.window-buttons svg {
    width: 12px;
    height: 12px;
}

/* Ribbon tabs */
.ribbon-tabs {
    display: flex;
    height: 20px;
    padding-left: 3px;
}

.ribbon-tabs button {
    padding: 0 11px 0 10px;
}

.ribbon-tabs .file {
    width: 45px;
    margin-right: 2px;
    background: #2a7ab0;
    color: #fff;
}

.ribbon-tabs .current {
    background: #e6f0d7;
    color: #111;
}

.ribbon-tabs .toggle {
    padding: 0 20px;
}

.ribbon-tabs .toggle svg {
    width: 26px;
    height: 10px;
}

/* Ribbon panels */
.ribbon {
    display: flex;
    height: 96px;
    padding-left: 3px;
    background: #e6f0d7;
    border-bottom: 1px solid #ccc;
}

.panel {
    display: flex;
    flex-direction: column;
    margin-right: 1px;
    background: #eee;
}

.panel-body {
    display: flex;
    flex: 1;
    padding-top: 3px;
}

.panel h2 {
    display: flex;
    align-items: center;
    justify-content: center;
    gap: 6px;
    height: 18px;
    margin-bottom: 1px;
    font-size: 11px;
    font-weight: 400;
}

.panel.context {
    margin-right: 2px;
    border-right: 1px solid #f4f8ee;
    border-left: 1px solid #f4f8ee;
}

.panel.context h2 {
    background: #e6f0d7;
}

.big {
    flex-direction: column;
    justify-content: flex-start;
    width: 38px;
    height: 72px;
    padding-top: 2px;
    line-height: 15px;
}

.big svg, .big-grid svg, .icon-big svg {
    width: 32px;
    height: 32px;
}

.big svg {
    margin-bottom: 4px;
}

.big svg.caret, .small-grid svg.caret, .big-grid svg.caret {
    width: 8px;
    height: 6px;
}

.big svg.cursor-icon {
    height: 20px;
    margin: 6px 0;
}

.big:disabled {
    color: #aaa;
}

.stack {
    flex-direction: column;
    align-items: center;
}

.icon-big {
    width: 38px;
    height: 36px;
}

.small-grid {
    display: grid;
    grid-template-rows: repeat(3, 24px);
    grid-auto-flow: column;
    grid-auto-columns: 25px;
}

.small-grid.labelled {
    grid-auto-columns: 76px;
}

.small-grid.labelled button {
    justify-content: flex-start;
    gap: 6px;
    padding-left: 4px;
}

.small-grid.carets {
    grid-auto-columns: 10px;
}

.big-grid {
    display: grid;
    grid-template-rows: repeat(2, 36px);
}

.big-grid.two {
    grid-template-columns: repeat(2, 38px);
}

.big-grid.four {
    grid-template-columns: repeat(4, 39px);
}

.select-panel {
    width: 56px;
}

.select-panel .panel-body {
    padding-left: 7px;
}

.modify-btn {
    width: 44px;
}

.properties-panel {
    width: 63px;
}

.clipboard-panel {
    width: 79px;
}

.clipboard-panel .big, .controls-panel .big {
    width: 54px;
}

.geometry-panel {
    width: 143px;
}

.controls-panel {
    width: 55px;
}

.modify-panel {
    width: 237px;
}

.view-panel {
    width: 64px;
}

.modify-panel .panel-body {
    gap: 2px;
}

.geometry-panel .panel-body, .modify-panel .panel-body, .view-panel .panel-body, .create-panel .panel-body {
    padding-left: 2px;
}

.measure-panel {
    width: 56px;
}

.measure-panel .panel-body {
    padding-left: 6px;
}

.measure-panel .carets {
    width: 16px;
}

.create-panel {
    width: 80px;
    margin-right: 4px;
}

.mode-panel {
    width: 60px;
}

.mode-panel .big {
    width: 58px;
}

.rebar-panel .panel-body {
    padding-right: 1px;
    padding-left: 2px;
}

.rebar-panel .long {
    width: 60px;
}

.options-bar {
    height: 28px;
    padding: 5px 12px;
    background: #e6f0d7;
    border-bottom: 2px solid #ccc;
    color: #111;
}

/* Workspace */
.workspace {
    display: flex;
    flex: 1;
    min-height: 0;
}

.palette-title {
    display: flex;
    align-items: center;
    justify-content: space-between;
    height: 20px;
    padding: 0 3px 0 2px;
    color: #444;
}

.palette-close svg {
    width: 10px;
    height: 10px;
}

/* Properties palette */
.properties {
    display: flex;
    flex-direction: column;
    width: 224px;
    padding: 0 2px 3px 4px;
    background: #eee;
    border-right: 2px solid #ccc;
    color: #000;
}

.type-selector {
    height: 72px;
    padding: 0 1px 0 2px;
    border: 1px solid #ccc;
    color: #444;
}

.type-selector .thumb {
    width: 66px;
    height: 66px;
    background: #a0a0a0;
    border: 2px solid #fff;
    border-width: 1px 4px;
    outline: 1px solid #ccc;
    outline-offset: -1px;
}

.type-selector .type-name {
    flex: 1;
    padding-left: 4px;
    text-align: left;
}

.filter-row {
    display: flex;
    align-items: center;
    height: 25px;
}

.combo {
    display: flex;
    align-items: center;
}

.combo select {
    flex: 1;
    width: 100%;
    height: 100%;
    appearance: none;
    padding: 0 3px;
    opacity: 1;
}

/* the arrow sits over the end of the select */
.combo svg {
    width: 12px;
    height: 8px;
    margin-right: 3px;
    margin-left: -16px;
    pointer-events: none;
}

.filter-row .combo {
    width: 134px;
    height: 23px;
    background: #e1e1e1;
    border: 1px solid #adadad;
}

.edit-type {
    gap: 5px;
    padding: 0 0 3px 6px;
}

.grid-scroll {
    flex: 1;
    overflow: hidden;
    background: #fff;
}

.param-grid {
    width: 216px;
    table-layout: fixed;
    border-collapse: separate;
    border-spacing: 0;
}

.col-name {
    width: 103px;
}

.col-assoc {
    width: 12px;
}

.param-grid td {
    height: 18px;
    padding-left: 2px;
    border-right: 1px dotted #555;
    border-bottom: 1px dotted #555;
    line-height: 16px;
    vertical-align: top;
    white-space: nowrap;
    overflow: hidden;
}

.param-grid td:first-child {
    padding-left: 8px;
}

.param-grid td:last-child {
    padding: 0;
}

.param-grid .focused {
    padding: 0;
}

.focused input {
    display: block;
    width: 100%;
    height: 17px;
    padding: 0 0 1px 1px;
    border: 1px solid #000;
    background: #fff;
}

.param-grid .locked td {
    color: #6d6d6d;
}

.param-grid th {
    height: 18px;
    padding: 0 6px 0 2px;
    background: #dcdcdc;
    font-weight: 400;
    line-height: 18px;
    text-align: left;
}

.param-grid th svg {
    float: right;
    width: 8px;
    height: 10px;
    margin-top: 3px;
}

.param-grid input[type="checkbox"] {
    display: block;
    appearance: none;
    width: 13px;
    height: 13px;
    margin: 3px 0 0 1px;
    border: 1px solid #333;
    background: #fff;
}

.param-grid input[type="checkbox"]:checked::after {
    content: "";
    display: block;
    width: 8px;
    height: 4px;
    margin: 2px 0 0 1px;
    border: solid #222;
    border-width: 0 0 1px 1px;
    transform: rotate(-45deg);
}

.param-grid input[type="checkbox"]:disabled {
    border-color: #ccc;
}

.assoc {
    width: 10px;
    height: 16px;
    margin-left: 1px;
    background: #e1e1e1;
    border: 1px solid #999;
}

.palette-footer {
    display: flex;
    align-items: center;
    justify-content: space-between;
    height: 26px;
    padding: 0 2px;
}

.palette-footer a {
    color: #0a62c4;
}

.palette-footer button {
    width: 73px;
    height: 21px;
    background: #ccc;
    border: 1px solid #bfbfbf;
    color: #8c8c8c;
}

/* View area */
.view-area {
    display: flex;
    flex: 1;
    flex-direction: column;
    min-width: 0;
    padding-bottom: 2px;
    background: #fff;
}

.view-tabs {
    display: flex;
    height: 20px;
    background: #ccc;
}

.view-tab {
    justify-content: flex-start;
    gap: 7px;
    width: 128px;
    padding: 0 5px;
    color: #555;
}

.view-tab.open {
    background: #fff;
    color: #222;
    font-weight: 700;
}

.view-tab .x {
    width: 10px;
    height: 10px;
    margin-left: auto;
}

.tab-menu {
    margin-left: auto;
    padding-right: 5px;
}

.tab-menu svg {
    width: 10px;
    height: 8px;
}

.canvas-row {
    display: flex;
    flex: 1;
    min-height: 0;
    padding-right: 2px;
}

.canvas {
    flex: 1;
    width: auto;
    min-width: 0;
    height: 100%;
}

.level path {
    fill: none;
    stroke: #000;
    shape-rendering: crispEdges;
}

.level .near {
    stroke-dasharray: 11 4 4 5;
    stroke-dashoffset: 15;
}

.level .far {
    stroke-dasharray: 71 21 28 21;
}

.slab path {
    stroke: #000;
}

.slab .join-edge, .selected .join-edge {
    stroke: #0a8fc4;
    stroke-dasharray: 8 7;
}

.selected path {
    stroke: #0a40c4;
}

.selected .hidden-edge {
    fill: none;
    stroke: #2b5abf;
}

.cube-face {
    fill: #8f9499;
    font-size: 11px;
    font-weight: 700;
}

.cube-side {
    fill: #8f9499;
    font-size: 9px;
}

.v-scroll {
    display: flex;
    flex-direction: column;
    align-items: center;
    justify-content: space-between;
    width: 16px;
    margin-top: 2px;
    padding: 3px 0;
    background: #eee;
}

.arrow {
    width: 12px;
    height: 12px;
}

.v-scroll .thumb {
    width: 16px;
    height: 17px;
    background: #ccc;
}

.view-control {
    display: flex;
    align-items: center;
    height: 17px;
    margin-left: 2px;
    padding-bottom: 1px;
    background: #eee;
    color: #000;
}

.view-control button {
    width: 21px;
}

.view-control .scale {
    width: 76px;
    padding-left: 6px;
}

.h-scroll {
    display: flex;
    flex: 1;
    align-items: center;
    justify-content: space-between;
    margin-left: 2px;
    padding: 0 8px 0 1px;
}

.h-scroll .thumb {
    width: 17px;
    height: 16px;
    background: #ccc;
}

.grip {
    width: 10px;
    height: 10px;
    margin-right: 4px;
}

/* Project browser */
.browser {
    display: flex;
    flex-direction: column;
    width: 307px;
    background: #eee;
    border-left: 2px solid #ccc;
}

.browser .palette-title {
    padding: 0 0 0 4px;
}

.tree {
    flex: 1;
    margin: 0 0 2px 2px;
    background: #fff;
    color: #000;
}

.tree ul, .tree li {
    list-style: none;
}

.node {
    position: relative;
    display: flex;
    align-items: center;
    height: 18px;
    padding-left: 4px;
}

/* dotted connector from the expander to the icon */
.node::before {
    content: "";
    position: absolute;
    top: 10px;
    left: 8px;
    width: 12px;
    border-top: 1px dotted #888;
}

.node svg {
    margin: 0 6px 0 7px;
}

.node i {
    width: 9px;
}

.expander {
    position: relative;
    width: 9px;
    height: 9px;
    margin-top: 2px;
    background: #fff;
    border: 1px solid #888;
    z-index: 1;
}

.expander::before, .expander:not(.open)::after {
    content: "";
    position: absolute;
    top: 3px;
    left: 1px;
    width: 5px;
    height: 1px;
    background: #2b4a8c;
}

.expander:not(.open)::after {
    transform: rotate(90deg);
}

.tree ul .node {
    padding-left: 24px;
}

.tree ul .node::before {
    left: 28px;
    width: 15px;
}

.tree ul .expander {
    margin-right: 13px;
}

.tree > li, .tree ul li {
    position: relative;
}

/* vertical dotted branches */
.tree > li::before, .tree > li > ul > li::before, .leaves li::before {
    content: "";
    position: absolute;
    top: 0;
    bottom: 0;
    left: 8px;
    border-left: 1px dotted #888;
}

.tree > li:first-child::before {
    top: 10px;
}

.tree > li:last-child::before {
    bottom: 8px;
}

.tree > li > ul > li::before {
    left: 28px;
}

.tree > li > ul > li:last-child::before {
    bottom: auto;
    height: 10px;
}

.leaves li {
    display: flex;
    align-items: center;
    height: 18px;
    padding-left: 60px;
}

.leaves li::before {
    left: 48px;
}

.leaves li:last-child::before {
    bottom: 8px;
}

.leaves li::after {
    content: "";
    position: absolute;
    top: 10px;
    left: 49px;
    width: 10px;
    border-top: 1px dotted #888;
}

.leaves svg {
    margin-right: 6px;
}

.leaves b {
    margin-left: -3px;
    padding: 1px 3px;
    background: #e2e2e2;
}

/* Status bar */
.status-bar {
    display: flex;
    align-items: center;
    height: 24px;
    padding: 1px 71px 0 4px;
    color: #000;
}

.status-bar .hint {
    flex: 1;
}

.worksets, .design-options, .selection {
    display: flex;
    align-items: center;
}

.status-bar .combo {
    width: 204px;
    height: 18px;
    background: #fff;
    color: #8a8a8a;
}

.status-bar button {
    width: 26px;
    height: 18px;
}

.worksets {
    margin-right: 19px;
}

.worksets .combo {
    margin: 0 3px 0 4px;
}

.design-options {
    margin-right: 225px;
}

.design-options .combo {
    margin-left: 3px;
}

.status-bar .filter {
    width: 18px;
}
```
